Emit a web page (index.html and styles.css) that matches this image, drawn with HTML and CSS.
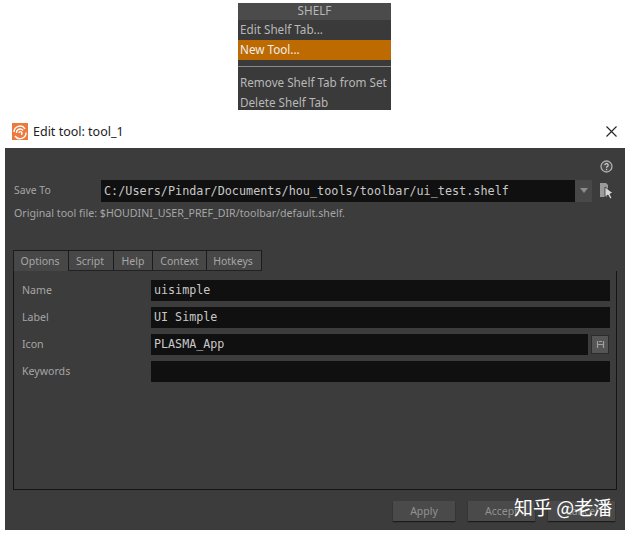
FILE: index.html
```html
<!DOCTYPE html>
<html lang="en">
<head>
<meta charset="utf-8">
<title>Edit tool</title>
<link rel="stylesheet" href="styles.css">
</head>
<body>
<div class="menu">
  <div class="menu-head">SHELF</div>
  <div class="menu-item">Edit Shelf Tab...</div>
  <div class="menu-item active">New Tool...</div>
  <div class="menu-sep"></div>
  <div class="menu-item">Remove Shelf Tab from Set</div>
  <div class="menu-item last">Delete Shelf Tab</div>
</div>

<div class="titlebar">
  <svg class="app-icon" width="16" height="17" viewBox="0 0 16 17">
    <rect width="16" height="17" fill="#ec7a3c"/>
    <path d="M2 9a6 6 0 0 1 11-3.200M4.500 10a3.600 3.600 0 0 1 6.500-2.500M14 9.500a6 6 0 0 1-11 3.500M7 10a1.500 1.500 0 1 1 2 1.500" fill="none" stroke="#fff" stroke-width="1.400"/>
  </svg>
  <span class="title">Edit tool: tool_1</span>
  <svg class="close" width="11" height="11" viewBox="0 0 11 11">
    <path d="M.5.500l10 10M10.500.500l-10 10" stroke="#222" stroke-width="1.100" fill="none"/>
  </svg>
</div>

<div class="dialog">
  <div class="help-row">
    <svg width="13" height="13" viewBox="0 0 13 13">
      <circle cx="6.500" cy="6.500" r="5.500" fill="#4a4a4a" stroke="#b0b0b0" stroke-width="1.300"/>
      <path d="M4.800 5.200a1.700 1.600 0 1 1 2.500 1.400c-.6.400-.8.700-.8 1.200" fill="none" stroke="#d0d0d0" stroke-width="1.200"/>
      <rect x="5.900" y="8.800" width="1.300" height="1.300" fill="#d0d0d0"/>
    </svg>
  </div>
  <div class="save-row">
    <span class="save-label">Save To</span>
    <div class="field save-field">C:/Users/Pindar/Documents/hou_tools/toolbar/ui_test.shelf</div>
    <div class="drop"><span class="tri"></span></div>
    <svg class="pick" width="14" height="17" viewBox="0 0 14 17">
      <path d="M0 1h6l2 2v4l-1 8H0z" fill="#9a9a9a"/>
      <path d="M5 5l8 6-3 1 2 4-2 1-2-4-3 2z" fill="#d6d6d6" stroke="#222" stroke-width=".7"/>
    </svg>
  </div>
  <div class="orig">Original tool file: $HOUDINI_USER_PREF_DIR/toolbar/default.shelf.</div>

  <div class="tabs">
    <div class="tab">Options</div>
    <div class="tab">Script</div>
    <div class="tab">Help</div>
    <div class="tab">Context</div>
    <div class="tab">Hotkeys</div>
  </div>
  <div class="panel">
    <div class="form-row"><span class="form-label">Name</span><div class="field form-field">uisimple</div></div>
    <div class="form-row"><span class="form-label">Label</span><div class="field form-field">UI Simple</div></div>
    <div class="form-row"><span class="form-label">Icon</span><div class="field form-field">PLASMA_App</div>
      <div class="icon-btn"><svg width="9" height="9" viewBox="0 0 9 9"><path d="M1.500 1v7M7.500 1v7M1.500 4.500h6M3 1.500h3" fill="none" stroke="#a0a0a0" stroke-width="1.200"/></svg></div>
    </div>
    <div class="form-row"><span class="form-label">Keywords</span><div class="field form-field"></div></div>
  </div>
  <div class="buttons">
    <div class="btn">Apply</div>
    <div class="btn">Accept</div>
    <div class="btn">Cancel</div>
  </div>
  <div class="watermark">知乎 @老潘</div>
</div>
</body>
</html>
```
FILE: styles.css
```css
* { box-sizing: border-box; }
html, body { margin: 0; padding: 0; }
body {
  width: 629px;
  height: 534px;
  background: #fff;
  font-family: "Noto Sans", "Open Sans", sans-serif;
  overflow: hidden;
}

.menu {
  margin: 3px 0 0 238px;
  width: 153px;
  height: 107px;
  background: #3a3a3a;
  color: #b8b8b8;
  font-size: 11.700px;
  line-height: 18px;
}
.menu-head {
  height: 17px;
  line-height: 15px;
  text-align: center;
  background: #4b4b4b;
}
.menu-item { height: 20px; padding-left: 2px; white-space: nowrap; }
.menu-item.active { background: #bd6a00; color: #eee; }
.menu-item.last { height: 17px; }
.menu-sep { height: 1px; margin: 6px 0 6px; background: #8a8a8a; }

.titlebar {
  display: flex;
  align-items: center;
  height: 33px;
  margin-top: 5px;
  padding: 0 12px 0 12px;
  background: #fff;
}
.app-icon { flex: none; }
.title { margin-left: 5px; font-size: 12.500px; color: #222; }
.close { margin-left: auto; }

.dialog {
  position: relative;
  margin-left: 5px;
  width: 620px;
  height: 382px;
  background: #3c3c3c;
  color: #a6a6a6;
  font-size: 10.600px;
  padding: 0 8px;
}
.help-row { display: flex; justify-content: flex-end; padding: 12px 4px 0 0; height: 31px; }
.save-row { display: flex; align-items: center; height: 23px; }
.save-label { width: 88px; padding: 0 0 2px 1px; font-size: 10.400px; }
.field {
  background: #101010;
  color: #c8c8c8;
  font-family: "DejaVu Sans Mono", "Liberation Mono", monospace;
  font-size: 11.700px;
  white-space: nowrap;
}
.save-field { width: 474px; height: 22px; line-height: 22px; padding-left: 3px; font-size: 11.800px; }
.drop {
  width: 17px;
  height: 22px;
  background: #484848;
  display: flex;
  align-items: center;
  justify-content: center;
}
.tri {
  width: 0;
  height: 0;
  border-left: 4px solid transparent;
  border-right: 4px solid transparent;
  border-top: 5px solid #8c8c8c;
}
.pick { margin-left: 8px; }
.orig { margin: 4px 0 0 1px; height: 14px; line-height: 14px; font-size: 10.650px; white-space: nowrap; }

.tabs { display: flex; margin-top: 30px; height: 21px; }
.tab {
  height: 21px;
  line-height: 21px;
  text-align: center;
  font-size: 10.500px;
  background: #474747;
  border: 1px solid #1c1c1c;
  border-right: 0;
  border-bottom: 1px solid #222;
}
.tab:nth-child(1) { width: 55px; padding-right: 2px; border-bottom: 0; }
.tab:nth-child(2) { width: 45px; padding-right: 2px; }
.tab:nth-child(3) { width: 39px; }
.tab:nth-child(4) { width: 54px; }
.tab:nth-child(5) { width: 56px; padding-right: 2px; border-right: 1px solid #1c1c1c; }

.panel {
  width: 604px;
  height: 219px;
  border: 1px solid #151515;
  border-top: 0;
  padding-top: 6px;
}
.form-row { display: flex; align-items: center; height: 27px; }
.form-label { width: 137px; padding: 0 0 2px 8px; }
.form-field { width: 459px; height: 21px; line-height: 21px; padding-left: 3px; }
.form-row:nth-child(3) .form-field { width: 437px; }
.icon-btn {
  width: 18px;
  height: 19px;
  margin-left: 3px;
  background: #555;
  border: 1px solid #2c2c2c;
  display: flex;
  align-items: center;
  justify-content: center;
}

.buttons { display: flex; justify-content: flex-end; gap: 13px; margin-top: 11px; padding-right: 2px; }
.btn {
  width: 67px;
  height: 20px;
  line-height: 20px;
  text-align: center;
  font-size: 10.500px;
  color: #929292;
  background: #4a4a4a;
  box-shadow: 0 1px 1px #1c1c1c;
}
.buttons .btn:nth-child(1) { width: 62px; }
.watermark {
  position: absolute;
  left: 509px;
  top: 346px;
  font-family: "Noto Sans CJK SC", sans-serif;
  font-size: 19px;
  line-height: 26px;
  color: #fff;
  white-space: nowrap;
}
```
